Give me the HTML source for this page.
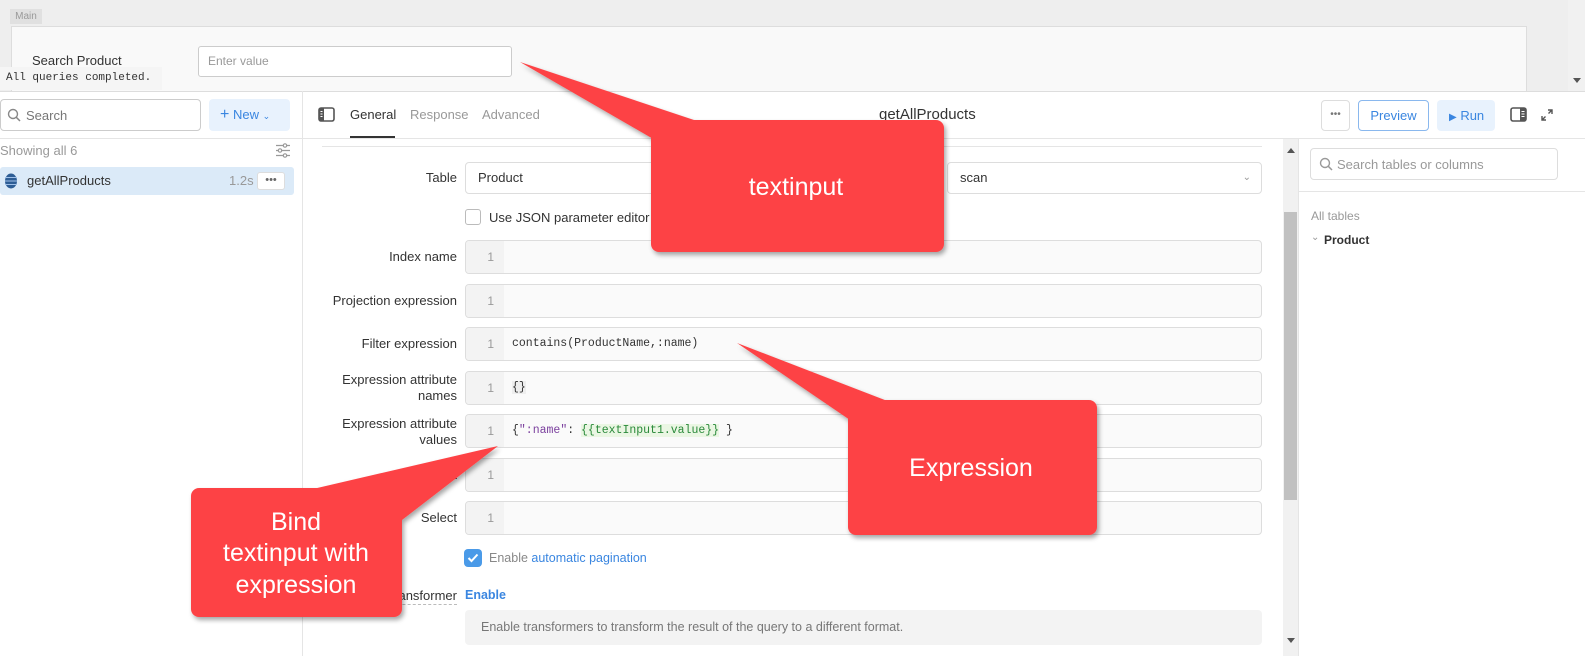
<!DOCTYPE html>
<html><head><style>
*{box-sizing:border-box;margin:0;padding:0}
body{width:1585px;height:656px;overflow:hidden;font-family:"Liberation Sans",sans-serif;font-size:13px;color:#333;background:#fff;position:relative}
.a{position:absolute}
.lbl{position:absolute;right:1128px;text-align:right;font-size:13px;color:#333;line-height:16px}
.inp{position:absolute;left:465px;width:797px;height:34px;border:1px solid #ddd;border-radius:4px;background:#fafafa;overflow:hidden}
.inp .g{position:absolute;left:0;top:0;width:38px;height:100%;background:#f3f3f3;color:#999;font-size:12px;text-align:right;padding-right:10px;line-height:32px}
.inp .c{position:absolute;left:46px;top:0;line-height:32px;font-family:"Liberation Mono",monospace;font-size:11.5px;color:#333}
.mono{font-family:"Liberation Mono",monospace}
</style></head><body>
<div class="a" style="left:0;top:0;width:1585px;height:91px;background:#eeeeee"></div>
<div class="a" style="left:10px;top:9px;width:32px;height:15px;background:#e0e0e0;color:#999;font-size:10px;line-height:15px;text-align:center">Main</div>
<div class="a" style="left:11px;top:26px;width:1516px;height:66px;background:#f9f9f9;border:1px solid #ddd;border-bottom:none"></div>
<div class="a" style="left:32px;top:53px;font-size:13px;color:#333">Search Product</div>
<div class="a" style="left:198px;top:46px;width:314px;height:31px;background:#fff;border:1px solid #ccc;border-radius:3px;color:#999;font-size:12px;line-height:29px;padding-left:9px">Enter value</div>
<div class="a mono" style="left:0;top:67px;width:162px;height:23px;background:#f5f5f5;font-size:11px;line-height:22px;padding-left:6px;color:#333">All queries completed.</div>
<div class="a" style="left:1568px;top:0;width:17px;height:91px;background:#f1f1f1"></div>
<div class="a" style="left:1573px;top:78px;width:0;height:0;border-left:4px solid transparent;border-right:4px solid transparent;border-top:5px solid #555"></div>

<div class="a" style="left:0;top:91px;width:1585px;height:1px;background:#ddd"></div>
<div class="a" style="left:302px;top:91px;width:1px;height:565px;background:#e5e5e5"></div>
<div class="a" style="left:303px;top:138px;width:1282px;height:1px;background:#e5e5e5"></div>
<div class="a" style="left:0;top:138px;width:302px;height:1px;background:#e5e5e5"></div>
<div class="a" style="left:1298px;top:139px;width:1px;height:517px;background:#e5e5e5"></div>

<div class="a" style="left:0;top:99px;width:201px;height:32px;border:1px solid #ccc;border-radius:4px"></div>
<svg class="a" style="left:7px;top:108px" width="14" height="14" viewBox="0 0 14 14"><circle cx="6" cy="6" r="4.5" fill="none" stroke="#888" stroke-width="1.4"/><path d="M9.3 9.3L13 13" stroke="#888" stroke-width="1.5"/></svg>
<div class="a" style="left:26px;top:108px;color:#777;font-size:13px">Search</div>
<div class="a" style="left:209px;top:99px;width:81px;height:32px;background:#e8f2fd;border-radius:4px;color:#3a86e0;font-size:13px;line-height:32px;padding-left:11px"><span style="font-size:16px">+</span> New <span style="font-size:9px">⌄</span></div>
<div class="a" style="left:0;top:143px;color:#999;font-size:13px">Showing all 6</div>
<svg class="a" style="left:275px;top:143px" width="16" height="15" viewBox="0 0 16 15"><g stroke="#999" stroke-width="1.2" fill="#fff"><path d="M1 2.5h14M1 7.5h14M1 12.5h14"/><circle cx="10" cy="2.5" r="1.7"/><circle cx="5" cy="7.5" r="1.7"/><circle cx="10" cy="12.5" r="1.7"/></g></svg>
<div class="a" style="left:0;top:167px;width:294px;height:28px;background:#dbeaf8;border-radius:3px"></div>
<svg class="a" style="left:4px;top:173px" width="14" height="16" viewBox="0 0 14 16"><ellipse cx="7" cy="8" rx="6" ry="7.5" fill="#2d5d95"/><path d="M1 4.5h12M1 8h12M1 11.5h12" stroke="#9fc0e8" stroke-width="1"/></svg>
<div class="a" style="left:27px;top:173px;font-size:13px;color:#333">getAllProducts</div>
<div class="a" style="left:229px;top:173px;font-size:13px;color:#999">1.2s</div>
<div class="a" style="left:257px;top:172px;width:28px;height:18px;background:#fff;border:1px solid #ddd;border-radius:3px;text-align:center;font-size:11px;line-height:14px;color:#666">•••</div>

<svg class="a" style="left:318px;top:107px" width="17" height="15" viewBox="0 0 17 15"><rect x="1" y="1" width="15" height="13" rx="2" fill="none" stroke="#555" stroke-width="1.6"/><rect x="1" y="1" width="5" height="13" fill="#555"/><path d="M2.5 4.5h2M2.5 7h2M2.5 9.5h2" stroke="#fff"/></svg>
<div class="a" style="left:350px;top:107px;font-size:13px;color:#333">General</div>
<div class="a" style="left:350px;top:136px;width:45px;height:2px;background:#333"></div>
<div class="a" style="left:410px;top:107px;font-size:13px;color:#999">Response</div>
<div class="a" style="left:482px;top:107px;font-size:13px;color:#999">Advanced</div>
<div class="a" style="left:879px;top:106px;font-size:15px;color:#333">getAllProducts</div>
<div class="a" style="left:1321px;top:100px;width:29px;height:31px;border:1px solid #ddd;border-radius:4px;text-align:center;line-height:28px;font-size:10px;color:#777">•••</div>
<div class="a" style="left:1358px;top:100px;width:71px;height:31px;border:1px solid #8ab8ee;border-radius:4px;text-align:center;line-height:29px;font-size:13px;color:#3a86e0">Preview</div>
<div class="a" style="left:1437px;top:100px;width:58px;height:31px;background:#e8f2fd;border-radius:4px;line-height:31px;font-size:13px;color:#3a86e0;padding-left:12px"><span style="font-size:10px">▶</span> Run</div>
<svg class="a" style="left:1510px;top:107px" width="17" height="15" viewBox="0 0 17 15"><rect x="1" y="1" width="15" height="13" rx="2" fill="none" stroke="#555" stroke-width="1.6"/><rect x="10" y="1" width="6" height="13" fill="#555"/><path d="M11.5 4.5h3M11.5 7h3M11.5 9.5h3" stroke="#fff"/></svg>
<svg class="a" style="left:1541px;top:109px" width="12" height="12" viewBox="0 0 12 12"><path d="M7 1h4v4M11 1L7.5 4.5M5 11H1V7M1 11l3.5-3.5" stroke="#555" stroke-width="1.4" fill="none"/></svg>

<div class="a" style="left:1310px;top:148px;width:248px;height:32px;border:1px solid #ddd;border-radius:4px"></div>
<svg class="a" style="left:1319px;top:157px" width="14" height="14" viewBox="0 0 14 14"><circle cx="6" cy="6" r="4.5" fill="none" stroke="#999" stroke-width="1.4"/><path d="M9.3 9.3L13 13" stroke="#999" stroke-width="1.5"/></svg>
<div class="a" style="left:1337px;top:157px;color:#999;font-size:13px">Search tables or columns</div>
<div class="a" style="left:1299px;top:191px;width:286px;height:1px;background:#e5e5e5"></div>
<div class="a" style="left:1311px;top:209px;color:#999;font-size:12px">All tables</div>
<div class="a" style="left:1311px;top:232px;color:#999;font-size:10px">⌄</div>
<div class="a" style="left:1324px;top:233px;color:#333;font-size:12px;font-weight:bold">Product</div>

<div class="a" style="left:1283px;top:139px;width:15px;height:517px;background:#f1f1f1"></div>
<div class="a" style="left:1287px;top:148px;border-left:4px solid transparent;border-right:4px solid transparent;border-bottom:5px solid #555"></div>
<div class="a" style="left:1284px;top:212px;width:13px;height:288px;background:#c1c1c1"></div>
<div class="a" style="left:1287px;top:638px;border-left:4px solid transparent;border-right:4px solid transparent;border-top:5px solid #555"></div>

<div class="a" style="left:322px;top:146px;width:940px;height:1px;background:#e5e5e5"></div>
<div class="lbl" style="top:170px;right:1128px">Table</div>
<div class="a" style="left:465px;top:162px;width:300px;height:32px;border:1px solid #ddd;border-radius:4px;line-height:30px;padding-left:12px;font-size:13px">Product</div>
<div class="a" style="left:947px;top:162px;width:315px;height:32px;border:1px solid #ddd;border-radius:4px;line-height:30px;padding-left:12px;font-size:13px">scan<span style="position:absolute;right:10px;color:#999;font-size:10px">⌄</span></div>
<div class="a" style="left:465px;top:209px;width:16px;height:16px;border:1.5px solid #bbb;border-radius:3px"></div>
<div class="a" style="left:489px;top:210px;font-size:13px">Use JSON parameter editor</div>

<div class="lbl" style="top:249px">Index name</div>
<div class="inp" style="top:240px"><div class="g">1</div></div>
<div class="lbl" style="top:293px">Projection expression</div>
<div class="inp" style="top:284px"><div class="g">1</div></div>
<div class="lbl" style="top:336px">Filter expression</div>
<div class="inp" style="top:327px"><div class="g">1</div><div class="c">contains(ProductName,:name)</div></div>
<div class="lbl" style="top:372px">Expression attribute<br>names</div>
<div class="inp" style="top:371px"><div class="g">1</div><div class="c"><span style="background:#eee">{}</span></div></div>
<div class="lbl" style="top:416px">Expression attribute<br>values</div>
<div class="inp" style="top:414px"><div class="g">1</div><div class="c">{<span style="color:#7a3e9d">":name"</span>: <span style="background:#eaf6e3;color:#2a8a3a">{{textInput1.value}}</span> }</div></div>
<div class="lbl" style="top:467px">Limit</div>
<div class="inp" style="top:458px"><div class="g">1</div></div>
<div class="lbl" style="top:510px">Select</div>
<div class="inp" style="top:501px"><div class="g">1</div></div>
<div class="a" style="left:464px;top:549px;width:18px;height:18px;background:#4a9ae8;border-radius:4px"></div>
<svg class="a" style="left:467px;top:553px" width="12" height="10" viewBox="0 0 12 10"><path d="M1.5 5l3 3 6-6.5" stroke="#fff" stroke-width="2" fill="none"/></svg>
<div class="a" style="left:489px;top:551px;font-size:12.5px;color:#888">Enable <span style="color:#3a86e0">automatic pagination</span></div>
<div class="lbl" style="top:588px;border-bottom:1px dashed #bbb">Transformer</div>
<div class="a" style="left:465px;top:588px;font-size:12.5px;color:#3a86e0;font-weight:bold">Enable</div>
<div class="a" style="left:465px;top:610px;width:797px;height:35px;background:#f3f3f3;border-radius:4px;line-height:35px;padding-left:16px;font-size:12.5px;color:#777">Enable transformers to transform the result of the query to a different format.</div>

<svg class="a" style="left:0;top:0" width="1585" height="656">
<defs><filter id="s" x="-10%" y="-10%" width="130%" height="130%"><feDropShadow dx="2" dy="3" stdDeviation="2.5" flood-color="#000" flood-opacity="0.35"/></filter></defs>
<g fill="#fd4345" filter="url(#s)">
<path d="M520 62 L700 122 L655 140 Z"/><rect x="651" y="120" width="293" height="132" rx="8"/>
<path d="M737 343 L890 402 L850 420 Z"/><rect x="848" y="400" width="249" height="135" rx="8"/>
<path d="M498 446 L300 492 L402 520 Z"/><rect x="191" y="488" width="211" height="129" rx="8"/>
</g>
<g fill="#fff" font-family="Liberation Sans, sans-serif" font-size="25" text-anchor="middle">
<text x="796" y="195">textinput</text>
<text x="971" y="476">Expression</text>
<text x="296" y="530">Bind</text>
<text x="296" y="561">textinput with</text>
<text x="296" y="593">expression</text>
</g>
</svg>
</body></html>
